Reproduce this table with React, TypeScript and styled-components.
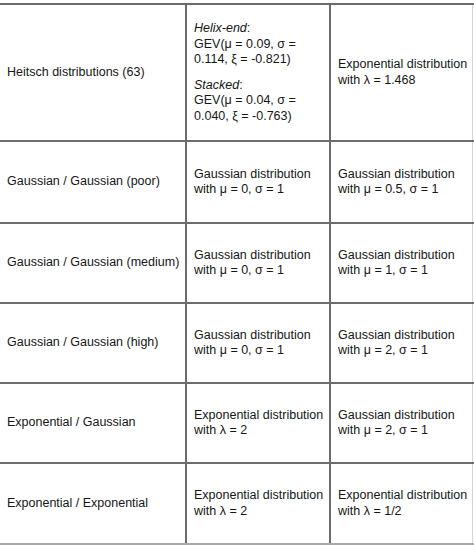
import React from "react";
import styled, { createGlobalStyle } from "styled-components";

const Global = createGlobalStyle`
  html, body { margin: 0; padding: 0; background: #ffffff; }
  body {
    font-family: "Liberation Sans", Arial, sans-serif;
    color: #161616;
  }
`;

const Table = styled.div`
  width: 474px;
  margin-top: 3px;
  border-top: 2px solid #6c6c6c;
`;

const Row = styled.div<{ $h: number; $last?: boolean }>`
  display: grid;
  grid-template-columns: 187px 144px 143px;
  height: ${(p) => p.$h}px;
  box-sizing: border-box;
  border-bottom: 2px solid ${(p) => (p.$last ? "#a8a8a8" : "#6c6c6c")};
`;

const Cell = styled.div<{ $end?: boolean }>`
  display: flex;
  flex-direction: column;
  justify-content: center;
  box-sizing: border-box;
  padding: 0 0 0 7px;
  border-right: ${(p) => (p.$end ? "1px solid #d4d4d4" : "2px solid #6c6c6c")};
  margin-right: ${(p) => (p.$end ? "1px" : "0")};
  font-size: 12.5px;
  line-height: 15.5px;
  white-space: nowrap;
`;

const Para = styled.div<{ $gap?: boolean }>`
  margin-top: ${(p) => (p.$gap ? "10px" : "0")};
`;

const Em = styled.i`
  font-style: italic;
`;

type RowData = {
  h: number;
  label: string;
  a: React.ReactNode;
  b: React.ReactNode;
};

const rows: RowData[] = [
  {
    h: 137,
    label: "Heitsch distributions (63)",
    a: (
      <>
        <Para>
          <Em>Helix-end</Em>:<br />
          GEV(μ = 0.09, σ =<br />
          0.114, ξ = -0.821)
        </Para>
        <Para $gap>
          <Em>Stacked</Em>:<br />
          GEV(μ = 0.04, σ =<br />
          0.040, ξ = -0.763)
        </Para>
      </>
    ),
    b: (
      <>
        Exponential distribution
        <br />
        with λ = 1.468
      </>
    ),
  },
  {
    h: 82,
    label: "Gaussian / Gaussian (poor)",
    a: (
      <>
        Gaussian distribution
        <br />
        with μ = 0, σ = 1
      </>
    ),
    b: (
      <>
        Gaussian distribution
        <br />
        with μ = 0.5, σ = 1
      </>
    ),
  },
  {
    h: 80,
    label: "Gaussian / Gaussian (medium)",
    a: (
      <>
        Gaussian distribution
        <br />
        with μ = 0, σ = 1
      </>
    ),
    b: (
      <>
        Gaussian distribution
        <br />
        with μ = 1, σ = 1
      </>
    ),
  },
  {
    h: 80,
    label: "Gaussian / Gaussian (high)",
    a: (
      <>
        Gaussian distribution
        <br />
        with μ = 0, σ = 1
      </>
    ),
    b: (
      <>
        Gaussian distribution
        <br />
        with μ = 2, σ = 1
      </>
    ),
  },
  {
    h: 80,
    label: "Exponential / Gaussian",
    a: (
      <>
        Exponential distribution
        <br />
        with λ = 2
      </>
    ),
    b: (
      <>
        Gaussian distribution
        <br />
        with μ = 2, σ = 1
      </>
    ),
  },
  {
    h: 81,
    label: "Exponential / Exponential",
    a: (
      <>
        Exponential distribution
        <br />
        with λ = 2
      </>
    ),
    b: (
      <>
        Exponential distribution
        <br />
        with λ = 1/2
      </>
    ),
  },
];

export default function App() {
  return (
    <>
      <Global />
      <Table>
        {rows.map((r, i) => (
          <Row key={i} $h={r.h} $last={i === rows.length - 1}>
            <Cell>{r.label}</Cell>
            <Cell>{r.a}</Cell>
            <Cell $end>{r.b}</Cell>
          </Row>
        ))}
      </Table>
    </>
  );
}
